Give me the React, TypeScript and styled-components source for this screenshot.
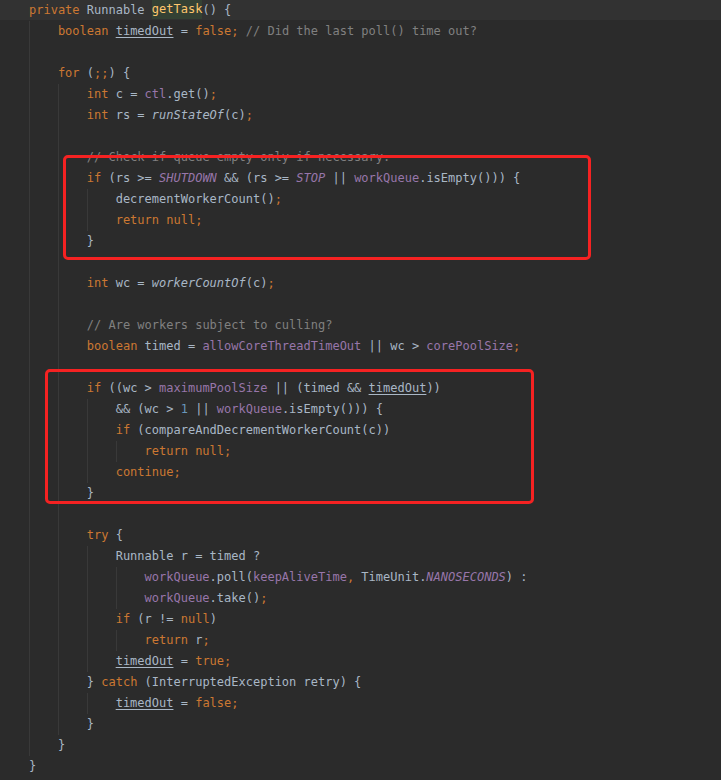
import React from "react";
import styled, { createGlobalStyle, css } from "styled-components";

const Global = createGlobalStyle`
  html, body { margin: 0; padding: 0; background: #2b2b2b; }
  #root { background: #2b2b2b; }
`;

type Kind = "k" | "t" | "f" | "fi" | "m" | "si" | "c" | "n" | "u";
type Tok = [Kind, string];
type LineDef = { indent: number; guides: number; toks: Tok[]; current?: boolean };

const Editor = styled.div`
  position: relative;
  width: 721px;
  height: 780px;
  overflow: hidden;
  background: #2b2b2b;
  font-family: "DejaVu Sans Mono", "Liberation Mono", monospace;
  font-size: 12px;
  color: #a9b7c6;
`;

const Row = styled.div<{ $current?: boolean }>`
  display: flex;
  align-items: stretch;
  height: 21px;
  line-height: 21px;
  padding-left: 29px;
  white-space: pre;
  ${(p) =>
    p.$current &&
    css`
      background: linear-gradient(#323232 0 20px, transparent 20px);
    `}
`;

const IndentCell = styled.span<{ $guide: boolean }>`
  flex: 0 0 auto;
  width: 4ch;
  ${(p) =>
    p.$guide &&
    css`
      box-shadow: inset 1px 0 0 #393939;
    `}
`;

const Code = styled.span`
  flex: 0 0 auto;
`;

const Tk = styled.span<{ $k: Kind }>`
  ${(p) => {
    switch (p.$k) {
      case "k":
        return css`color: #cc7832;`;
      case "f":
        return css`color: #9876aa;`;
      case "fi":
        return css`color: #9876aa; font-style: italic;`;
      case "si":
        return css`color: #a9b7c6; font-style: italic;`;
      case "c":
        return css`color: #808080;`;
      case "n":
        return css`color: #6897bb;`;
      case "u":
        return css`
          color: #a9b7c6;
          text-decoration: underline;
          text-underline-offset: 2px;
          text-decoration-color: #a9b7c6;
        `;
      case "m":
        return css`
          color: #ffc66d;
          background: #344134;
          display: inline-block;
          line-height: 19px;
          vertical-align: top;
        `;
      default:
        return css`color: #a9b7c6;`;
    }
  }}
`;

const Mark = styled.div<{ $l: number; $t: number; $w: number; $h: number }>`
  position: absolute;
  left: ${(p) => p.$l}px;
  top: ${(p) => p.$t}px;
  width: ${(p) => p.$w}px;
  height: ${(p) => p.$h}px;
  box-sizing: border-box;
  border: 3px solid #f52222;
  border-radius: 5px;
  pointer-events: none;
`;

const L = (indent: number, guides: number, toks: Tok[], current?: boolean): LineDef => ({
  indent,
  guides,
  toks,
  current,
});

const lines: LineDef[] = [
  L(0, 0, [["k", "private "], ["t", "Runnable "], ["m", "getTask"], ["t", "() {"]], true),
  L(1, 1, [["k", "boolean "], ["u", "timedOut"], ["t", " = "], ["k", "false;"], ["c", " // Did the last poll() time out?"]]),
  L(1, 1, []),
  L(1, 1, [["k", "for "], ["t", "("], ["k", ";;"], ["t", ") {"]]),
  L(2, 2, [["k", "int "], ["t", "c = "], ["f", "ctl"], ["t", ".get()"], ["k", ";"]]),
  L(2, 2, [["k", "int "], ["t", "rs = "], ["si", "runStateOf"], ["t", "(c)"], ["k", ";"]]),
  L(2, 2, []),
  L(2, 2, [["c", "// Check if queue empty only if necessary."]]),
  L(2, 2, [["k", "if "], ["t", "(rs >= "], ["fi", "SHUTDOWN"], ["t", " && (rs >= "], ["fi", "STOP"], ["t", " || "], ["f", "workQueue"], ["t", ".isEmpty())) {"]]),
  L(3, 3, [["t", "decrementWorkerCount()"], ["k", ";"]]),
  L(3, 3, [["k", "return null;"]]),
  L(2, 2, [["t", "}"]]),
  L(2, 2, []),
  L(2, 2, [["k", "int "], ["t", "wc = "], ["si", "workerCountOf"], ["t", "(c)"], ["k", ";"]]),
  L(2, 2, []),
  L(2, 2, [["c", "// Are workers subject to culling?"]]),
  L(2, 2, [["k", "boolean "], ["t", "timed = "], ["f", "allowCoreThreadTimeOut"], ["t", " || wc > "], ["f", "corePoolSize"], ["k", ";"]]),
  L(2, 2, []),
  L(2, 2, [["k", "if "], ["t", "((wc > "], ["f", "maximumPoolSize"], ["t", " || (timed && "], ["u", "timedOut"], ["t", "))"]]),
  L(3, 3, [["t", "&& (wc > "], ["n", "1"], ["t", " || "], ["f", "workQueue"], ["t", ".isEmpty())) {"]]),
  L(3, 3, [["k", "if "], ["t", "(compareAndDecrementWorkerCount(c))"]]),
  L(4, 4, [["k", "return null;"]]),
  L(3, 3, [["k", "continue;"]]),
  L(2, 2, [["t", "}"]]),
  L(2, 2, []),
  L(2, 2, [["k", "try "], ["t", "{"]]),
  L(3, 3, [["t", "Runnable r = timed ?"]]),
  L(4, 4, [["f", "workQueue"], ["t", ".poll("], ["f", "keepAliveTime"], ["k", ","], ["t", " TimeUnit."], ["fi", "NANOSECONDS"], ["t", ") :"]]),
  L(4, 4, [["f", "workQueue"], ["t", ".take()"], ["k", ";"]]),
  L(3, 3, [["k", "if "], ["t", "(r != "], ["k", "null"], ["t", ")"]]),
  L(4, 4, [["k", "return "], ["t", "r"], ["k", ";"]]),
  L(3, 3, [["u", "timedOut"], ["t", " = "], ["k", "true;"]]),
  L(2, 2, [["t", "} "], ["k", "catch "], ["t", "(InterruptedException retry) {"]]),
  L(3, 3, [["u", "timedOut"], ["t", " = "], ["k", "false;"]]),
  L(2, 2, [["t", "}"]]),
  L(1, 1, [["t", "}"]]),
  L(0, 0, [["t", "}"]]),
];

const CodeLine: React.FC<{ line: LineDef }> = ({ line }) => {
  const cells = [];
  for (let i = 0; i < line.indent; i++) {
    cells.push(<IndentCell key={i} $guide={i < line.guides} />);
  }
  return (
    <Row $current={line.current}>
      {cells}
      <Code>
        {line.toks.map(([k, s], i) => (
          <Tk key={i} $k={k}>
            {s}
          </Tk>
        ))}
      </Code>
    </Row>
  );
};

export default function App() {
  return (
    <>
      <Global />
      <Editor>
        {lines.map((l, i) => (
          <CodeLine key={i} line={l} />
        ))}
        <Mark $l={63} $t={155} $w={528} $h={105} />
        <Mark $l={45} $t={369} $w={489} $h={135} />
      </Editor>
    </>
  );
}
